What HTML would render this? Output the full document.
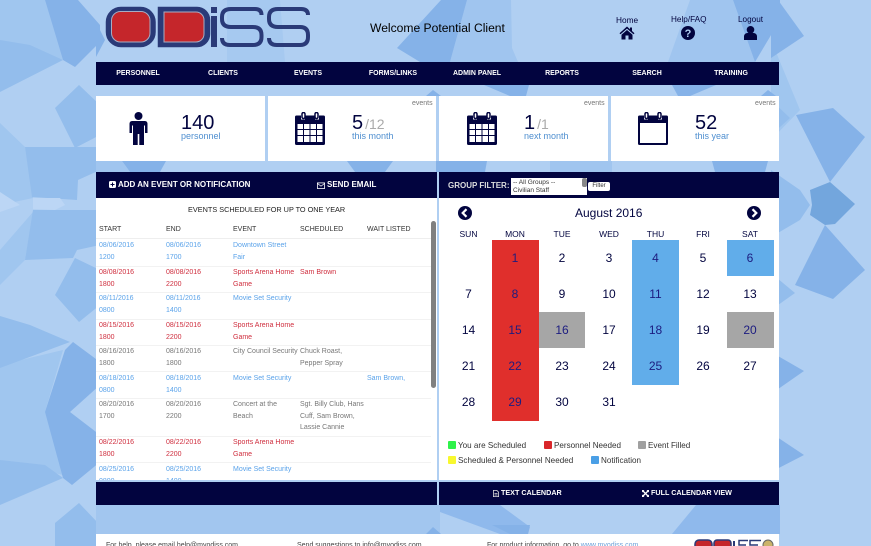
<!DOCTYPE html>
<html><head><meta charset="utf-8"><style>
html,body{margin:0;padding:0}
body{width:871px;height:546px;overflow:hidden;position:relative;background:#b0cff2;font-family:"Liberation Sans",sans-serif;color:#02043f}
#w{position:absolute;left:0;top:0;width:871px;height:546px;overflow:hidden;filter:blur(.3px)}
.a{position:absolute}
.t{position:absolute;white-space:nowrap}
.nav{position:absolute;top:62px;height:23px;line-height:23px;color:#fff;font-size:7px;font-weight:bold;white-space:nowrap;transform:translateX(-50%)}
.bar{position:absolute;background:#02043f}
.card{position:absolute;top:96px;height:65px;background:#fff}
.ev{position:absolute;top:100px;font-size:7px;color:#777;line-height:8px}
.num{position:absolute;top:112px;font-size:20px;line-height:22px;color:#02043f;white-space:nowrap}
.num span{color:#aaa;font-size:14px;margin-left:2px}
.lab{position:absolute;top:131px;font-size:9px;line-height:11px;color:#4f8fd0;white-space:nowrap}
.r{position:absolute;font-size:7px;line-height:11.6px;white-space:nowrap}
.b{color:#5ba3ea}.d{color:#cf2e3e}.g{color:#777}
.dow{position:absolute;top:229px;width:47px;text-align:center;font-size:8.5px;line-height:10px;color:#02043f}
.c{position:absolute;width:47px;height:36px;line-height:36px;text-align:center;font-size:12px;color:#02043f}
.k{color:#1c1c80}
.f{position:absolute;width:46.5px}
.lg{position:absolute;font-size:8.1px;line-height:10px;color:#333;white-space:nowrap}
.sw{position:absolute;width:8px;height:8px;border-radius:1px}
</style></head><body><div id="w">
<svg class="a" style="left:0;top:0" width="871" height="546" viewBox="0 0 871 546">
<g fill="#a0c6ef"><polygon points="0,0 45,0 63,60 0,40"/><polygon points="0,123 25,147 33,198 0,205"/><polygon points="0,250 33,212 25,260 0,285"/><polygon points="0,365 63,350 45,412 63,475 0,460"/><polygon points="771,40 800,110 771,140"/></g>
<g fill="#93bdec"><polygon points="0,40 30,45 63,60 0,92"/><polygon points="0,316 30,325 70,342 0,368"/><polygon points="0,460 45,465 63,478 0,505"/><polygon points="55,108 79,85 100,105 100,135 75,148"/><polygon points="55,295 79,322 100,305 100,270 75,258"/><polygon points="55,523 79,503 100,525 100,546 55,546"/><polygon points="25,147 100,147 100,170 78,180 77,200 32,197"/><polygon points="33,210 100,210 100,245 77,250 73,258 25,260"/><polygon points="771,170 800,190 810,205 800,220 771,237"/><polygon points="771,100 790,118 771,135"/><polygon points="771,273 795,293 771,310"/></g>
<g fill="#85b2e8"><polygon points="45,0 78,0 100,25 100,42 75,67 63,60"/><polygon points="73,342 100,362 100,385 70,412 100,435 100,462 72,485 63,478 45,412 65,350"/><polygon points="771,0 771,58 804,36 778,0"/><polygon points="796,115 833,108 865,137 830,182"/><polygon points="825,225 865,270 833,299 795,285"/><polygon points="771,352 804,371 771,394"/><polygon points="771,433 804,455 771,472"/></g>
<polygon fill="#73a6dd" points="810,190 830,182 855,204 835,224 825,225 810,215 812,205"/>
<g fill="#bcd6f5"><polygon points="0,192 20,205 0,212"/><polygon points="33,198 60,198 65,205 55,210 33,209"/></g>
<!-- header band -->
<g fill="#a6c9f0"><polygon points="227,0 280,0 285,62 227,62"/></g>
<g fill="#a0c5ef"><polygon points="467,0 511,0 512,48 518,62 450,62"/><polygon points="690,0 733,0 755,62 668,62"/></g>
<g fill="#85b2e8"><polygon points="96,22 105,40 96,57"/><polygon points="397,48 441,0 467,0 450,62 420,62"/><polygon points="733,0 780,0 780,20 755,62"/></g>
<!-- gap 85-96 -->
<g fill="#85b2e8"><polygon points="426,96 433,90 441,96"/><polygon points="484,85 529,85 526,96 510,96"/><polygon points="672,85 716,85 690,96 678,96"/><polygon points="761,96 768,90 776,96"/></g>
<!-- gap 161-172 -->
<g fill="#85b2e8"><polygon points="122,161 166,161 160,172 130,172"/><polygon points="347,161 393,161 385,172 355,172"/><polygon points="436,161 487,161 485,172 436,172"/><polygon points="712,161 768,161 765,172 715,172"/></g>
<g fill="#a0c5ef"><polygon points="96,161 122,161 130,172 96,172"/><polygon points="550,161 612,161 612,172 550,172"/></g>
<!-- bottom gap -->
<g fill="#a2c6ef"><polygon points="96,505 440,505 440,534 96,534"/></g>
<g fill="#8fb9ec"><polygon points="440,505 500,505 530,527 528,534 500,534 440,512"/><polygon points="672,534 696,505 780,505 780,534"/></g>
<g fill="#85b2e8"><polygon points="426,534 433,527 441,534"/><polygon points="492,525 530,525 528,534 510,534"/></g>
</svg>

<!-- logo -->
<svg class="a" style="left:0;top:0" width="320" height="52" viewBox="0 0 320 52">
<rect x="108" y="9" width="45.500" height="36" rx="13" fill="#2a3a78" stroke="#2a3a78" stroke-width="4.500"/>
<rect x="111.500" y="11.500" width="38.500" height="30.500" rx="9" fill="#c5262b" stroke="#a6adc4" stroke-width="1"/>
<path d="M160 9H197a11 11 0 0 1 11 11V34a11 11 0 0 1 -11 11H160Z" fill="#2a3a78" stroke="#2a3a78" stroke-width="4.500"/>
<path d="M164 12H196a8 8 0 0 1 8 8V34a8 8 0 0 1 -8 8H164Z" fill="#c5262b" stroke="#a6adc4" stroke-width="1"/>
<rect x="211" y="7" width="6" height="6" fill="#2a3a78"/>
<rect x="211" y="16" width="6" height="31" fill="#2a3a78"/>
<path d="M261.500 15Q261.500 9 255 9H231Q222 9 222 17V19Q222 27 231 27H253Q261.500 27 261.500 35V37Q261.500 45 253 45H230Q222 45 222 38" fill="none" stroke="#2a3a78" stroke-width="4"/>
<path d="M308 15Q308 9 301 9H278Q269 9 269 17V19Q269 27 278 27H300Q308 27 308 35V37Q308 45 300 45H277Q269 45 269 38" fill="none" stroke="#2a3a78" stroke-width="4"/>
</svg>

<div class="t" style="left:370px;top:20px;font-size:12.1px;line-height:16px;color:#000">Welcome Potential Client</div>

<div class="t" style="left:616px;top:15px;font-size:8.3px;line-height:10px;color:#02043f">Home</div>
<div class="t" style="left:671px;top:15px;font-size:8.2px;line-height:10px;color:#02043f">Help/FAQ</div>
<div class="t" style="left:738px;top:15px;font-size:8.2px;line-height:10px;color:#02043f">Logout</div>
<svg class="a" style="left:619px;top:26px" width="16" height="14" viewBox="0 0 16 14"><path d="M8 0.500 0.500 7.200 1.500 8.300 8 2.600 14.500 8.300 15.500 7.200 13 5V1.500H11V3.200Z" fill="#02043f"/><path d="M8 4 2.500 8.700V13.500H6.500V9.500H9.500V13.500H13.500V8.700Z" fill="#02043f"/></svg>
<svg class="a" style="left:681px;top:26px" width="14" height="14" viewBox="0 0 14 14"><circle cx="7" cy="7" r="7" fill="#02043f"/><text x="7" y="11" text-anchor="middle" font-family="Liberation Sans" font-weight="bold" font-size="11" fill="#afcdf1">?</text></svg>
<svg class="a" style="left:744px;top:26px" width="13" height="14" viewBox="0 0 13 14"><circle cx="6.500" cy="3.800" r="3.800" fill="#02043f"/><path d="M0 14V10.500C0 8.500 1.500 7 3.500 7H9.500C11.500 7 13 8.500 13 10.500V14Z" fill="#02043f"/></svg>

<!-- nav -->
<div class="bar" style="left:96px;top:62px;width:683px;height:23px"></div>
<div class="nav" style="left:138px">PERSONNEL</div>
<div class="nav" style="left:223px">CLIENTS</div>
<div class="nav" style="left:308px">EVENTS</div>
<div class="nav" style="left:393px">FORMS/LINKS</div>
<div class="nav" style="left:477px">ADMIN PANEL</div>
<div class="nav" style="left:562px">REPORTS</div>
<div class="nav" style="left:647px">SEARCH</div>
<div class="nav" style="left:731px">TRAINING</div>

<!-- cards -->
<div class="card" style="left:96px;width:169px"></div>
<div class="card" style="left:268px;width:168px"></div>
<div class="card" style="left:439px;width:169px"></div>
<div class="card" style="left:611px;width:168px"></div>
<svg class="a" style="left:129px;top:112px" width="19" height="33" viewBox="0 0 19 33"><circle cx="9.500" cy="4" r="4" fill="#02043f"/><path d="M3.500 9H15.500C17.500 9 18.500 10 18.500 12V21H16V13.500H15V33H10.300V22H8.700V33H4V13.500H3V21H.5V12C.5 10 1.500 9 3.500 9Z" fill="#02043f"/></svg>
<div class="num" style="left:181px">140</div><div class="lab" style="left:181px">personnel</div>

<svg class="a" style="left:295px;top:112px" width="30" height="33" viewBox="0 0 30 33"><path d="M1.500 3.500H6V7.500H10V3.500H20V7.500H24V3.500H28.500A1.500 1.500 0 0 1 30 5V31.500A1.500 1.500 0 0 1 28.500 33H1.500A1.500 1.500 0 0 1 0 31.500V5A1.500 1.500 0 0 1 1.500 3.500Z" fill="#02043f"/><rect x="7" y="0.500" width="3" height="6" rx="1.500" fill="#fff" stroke="#02043f" stroke-width="1.500"/><rect x="20" y="0.500" width="3" height="6" rx="1.500" fill="#fff" stroke="#02043f" stroke-width="1.500"/><g fill="#fff"><rect x="2.500" y="12" width="5.500" height="5"/><rect x="9" y="12" width="5.500" height="5"/><rect x="15.500" y="12" width="5.500" height="5"/><rect x="22" y="12" width="5.500" height="5"/><rect x="2.500" y="18" width="5.500" height="5"/><rect x="9" y="18" width="5.500" height="5"/><rect x="15.500" y="18" width="5.500" height="5"/><rect x="22" y="18" width="5.500" height="5"/><rect x="2.500" y="24" width="5.500" height="6"/><rect x="9" y="24" width="5.500" height="6"/><rect x="15.500" y="24" width="5.500" height="6"/><rect x="22" y="24" width="5.500" height="6"/></g></svg>
<div class="ev" style="left:412px">events</div>
<div class="num" style="left:352px">5<span>/12</span></div><div class="lab" style="left:352px">this month</div>

<svg class="a" style="left:467px;top:112px" width="30" height="33" viewBox="0 0 30 33"><path d="M1.500 3.500H6V7.500H10V3.500H20V7.500H24V3.500H28.500A1.500 1.500 0 0 1 30 5V31.500A1.500 1.500 0 0 1 28.500 33H1.500A1.500 1.500 0 0 1 0 31.500V5A1.500 1.500 0 0 1 1.500 3.500Z" fill="#02043f"/><rect x="7" y="0.500" width="3" height="6" rx="1.500" fill="#fff" stroke="#02043f" stroke-width="1.500"/><rect x="20" y="0.500" width="3" height="6" rx="1.500" fill="#fff" stroke="#02043f" stroke-width="1.500"/><g fill="#fff"><rect x="2.500" y="12" width="5.500" height="5"/><rect x="9" y="12" width="5.500" height="5"/><rect x="15.500" y="12" width="5.500" height="5"/><rect x="22" y="12" width="5.500" height="5"/><rect x="2.500" y="18" width="5.500" height="5"/><rect x="9" y="18" width="5.500" height="5"/><rect x="15.500" y="18" width="5.500" height="5"/><rect x="22" y="18" width="5.500" height="5"/><rect x="2.500" y="24" width="5.500" height="6"/><rect x="9" y="24" width="5.500" height="6"/><rect x="15.500" y="24" width="5.500" height="6"/><rect x="22" y="24" width="5.500" height="6"/></g></svg>
<div class="ev" style="left:584px">events</div>
<div class="num" style="left:524px">1<span>/1</span></div><div class="lab" style="left:524px">next month</div>

<svg class="a" style="left:638px;top:112px" width="30" height="33" viewBox="0 0 30 33"><path d="M1.500 3.500H6V7.500H10V3.500H20V7.500H24V3.500H28.500A1.500 1.500 0 0 1 30 5V31.500A1.500 1.500 0 0 1 28.500 33H1.500A1.500 1.500 0 0 1 0 31.500V5A1.500 1.500 0 0 1 1.500 3.500Z" fill="#02043f"/><rect x="7" y="0.500" width="3" height="6" rx="1.500" fill="#fff" stroke="#02043f" stroke-width="1.500"/><rect x="20" y="0.500" width="3" height="6" rx="1.500" fill="#fff" stroke="#02043f" stroke-width="1.500"/><rect x="2" y="11" width="26" height="20" fill="#fff"/></svg>
<div class="ev" style="left:755px">events</div>
<div class="num" style="left:695px">52</div><div class="lab" style="left:695px">this year</div>

<!-- left panel -->
<div class="bar" style="left:96px;top:172px;width:340.500px;height:26px"></div>
<div class="a" style="left:96px;top:198px;width:340.500px;height:282px;background:#fff"></div>
<svg class="a" style="left:109px;top:181px" width="7" height="7" viewBox="0 0 7 7"><rect width="7" height="7" rx="1.500" fill="#fff"/><path d="M3 1.500H4V3H5.500V4H4V5.500H3V4H1.500V3H3Z" fill="#02043f"/></svg>
<div class="t" style="left:118px;top:179px;font-size:8px;line-height:12px;font-weight:bold;color:#fff">ADD AN EVENT OR NOTIFICATION</div>
<svg class="a" style="left:317px;top:182px" width="8" height="7" viewBox="0 0 8 7"><rect x=".4" y=".9" width="7.200" height="5.600" fill="none" stroke="#fff" stroke-width=".8"/><path d="M.5 1.500 4 4.200 7.500 1.500" fill="none" stroke="#fff" stroke-width=".7"/></svg>
<div class="t" style="left:327px;top:179px;font-size:8px;line-height:12px;font-weight:bold;color:#fff">SEND EMAIL</div>
<div class="t" style="left:188px;top:205px;font-size:7.300px;line-height:10px;color:#222">EVENTS SCHEDULED FOR UP TO ONE YEAR</div>

<div class="t" style="left:99px;top:225px;font-size:7px;line-height:9px;color:#333">START</div>
<div class="t" style="left:166px;top:225px;font-size:7px;line-height:9px;color:#333">END</div>
<div class="t" style="left:233px;top:225px;font-size:7px;line-height:9px;color:#333">EVENT</div>
<div class="t" style="left:300px;top:225px;font-size:7px;line-height:9px;color:#333">SCHEDULED</div>
<div class="t" style="left:367px;top:225px;font-size:7px;line-height:9px;color:#333">WAIT LISTED</div>

<div class="a" style="left:96px;top:198px;width:335px;height:282px;overflow:hidden">
<div class="a" style="left:0;top:40px;width:335px;height:1px;background:#eee"></div>
<div class="a" style="left:0;top:68px;width:335px;height:1px;background:#f2f2f2"></div>
<div class="a" style="left:0;top:94px;width:335px;height:1px;background:#f2f2f2"></div>
<div class="a" style="left:0;top:121px;width:335px;height:1px;background:#f2f2f2"></div>
<div class="a" style="left:0;top:147px;width:335px;height:1px;background:#f2f2f2"></div>
<div class="a" style="left:0;top:173px;width:335px;height:1px;background:#f2f2f2"></div>
<div class="a" style="left:0;top:200px;width:335px;height:1px;background:#f2f2f2"></div>
<div class="a" style="left:0;top:238px;width:335px;height:1px;background:#f2f2f2"></div>
<div class="a" style="left:0;top:264px;width:335px;height:1px;background:#f2f2f2"></div>

<div class="r b" style="left:3px;top:42px">08/06/2016<br>1200</div><div class="r b" style="left:70px;top:42px">08/06/2016<br>1700</div><div class="r b" style="left:137px;top:42px">Downtown Street<br>Fair</div>
<div class="r d" style="left:3px;top:69px">08/08/2016<br>1800</div><div class="r d" style="left:70px;top:69px">08/08/2016<br>2200</div><div class="r d" style="left:137px;top:69px">Sports Arena Home<br>Game</div><div class="r d" style="left:204px;top:69px">Sam Brown</div>
<div class="r b" style="left:3px;top:95px">08/11/2016<br>0800</div><div class="r b" style="left:70px;top:95px">08/11/2016<br>1400</div><div class="r b" style="left:137px;top:95px">Movie Set Security</div>
<div class="r d" style="left:3px;top:122px">08/15/2016<br>1800</div><div class="r d" style="left:70px;top:122px">08/15/2016<br>2200</div><div class="r d" style="left:137px;top:122px">Sports Arena Home<br>Game</div>
<div class="r g" style="left:3px;top:148px">08/16/2016<br>1800</div><div class="r g" style="left:70px;top:148px">08/16/2016<br>1800</div><div class="r g" style="left:137px;top:148px">City Council Security</div><div class="r g" style="left:204px;top:148px">Chuck Roast,<br>Pepper Spray</div>
<div class="r b" style="left:3px;top:175px">08/18/2016<br>0800</div><div class="r b" style="left:70px;top:175px">08/18/2016<br>1400</div><div class="r b" style="left:137px;top:175px">Movie Set Security</div><div class="r b" style="left:271px;top:175px">Sam Brown,</div>
<div class="r g" style="left:3px;top:201px">08/20/2016<br>1700</div><div class="r g" style="left:70px;top:201px">08/20/2016<br>2200</div><div class="r g" style="left:137px;top:201px">Concert at the<br>Beach</div><div class="r g" style="left:204px;top:201px">Sgt. Billy Club, Hans<br>Cuff, Sam Brown,<br>Lassie Cannie</div>
<div class="r d" style="left:3px;top:239px">08/22/2016<br>1800</div><div class="r d" style="left:70px;top:239px">08/22/2016<br>2200</div><div class="r d" style="left:137px;top:239px">Sports Arena Home<br>Game</div>
<div class="r b" style="left:3px;top:266px">08/25/2016<br>0800</div><div class="r b" style="left:70px;top:266px">08/25/2016<br>1400</div><div class="r b" style="left:137px;top:266px">Movie Set Security</div>
</div>
<div class="a" style="left:431px;top:221px;width:5px;height:167px;background:#808080;border-radius:3px"></div>

<div class="bar" style="left:96px;top:482px;width:340.500px;height:23px"></div>

<!-- right panel -->
<div class="bar" style="left:439px;top:172px;width:340px;height:26px"></div>
<div class="a" style="left:439px;top:198px;width:340px;height:282px;background:#fff"></div>
<div class="t" style="left:448px;top:181px;font-size:8px;line-height:10px;font-weight:bold;color:#ddd">GROUP FILTER:</div>
<div class="a" style="left:511px;top:178px;width:76px;height:17px;background:#fff;font-size:6.500px;line-height:7.500px;color:#333;overflow:hidden"><div style="position:absolute;left:2px;top:1px;white-space:nowrap">-- All Groups --<br>Civilian Staff</div><div class="a" style="right:0;top:0;width:5px;height:9px;background:#888;border-radius:2px"></div></div>
<div class="a" style="left:588px;top:182px;width:22px;height:9px;background:#fff;border-radius:2px;font-size:6px;line-height:9px;text-align:center;color:#333">Filter</div>

<svg class="a" style="left:458px;top:206px" width="14" height="14" viewBox="0 0 14 14"><circle cx="7" cy="7" r="7" fill="#02043f"/><path d="M8.500 3.200 4.700 7 8.500 10.800" fill="none" stroke="#fff" stroke-width="2.200"/></svg>
<svg class="a" style="left:747px;top:206px" width="14" height="14" viewBox="0 0 14 14"><circle cx="7" cy="7" r="7" fill="#02043f"/><path d="M5.500 3.200 9.300 7 5.500 10.800" fill="none" stroke="#fff" stroke-width="2.200"/></svg>
<div class="t" style="left:575px;top:205px;font-size:12px;line-height:16px;color:#02043f">August 2016</div>

<div class="dow" style="left:445px">SUN</div><div class="dow" style="left:491.500px">MON</div><div class="dow" style="left:538.500px">TUE</div><div class="dow" style="left:585.500px">WED</div><div class="dow" style="left:632px">THU</div><div class="dow" style="left:679.500px">FRI</div><div class="dow" style="left:726.500px">SAT</div>

<div class="f" style="left:492px;top:240px;height:181px;background:#e02f2c"></div>
<div class="f" style="left:632px;top:240px;height:144.500px;background:#61adea"></div>
<div class="f" style="left:727px;top:240px;height:36px;background:#61adea"></div>
<div class="f" style="left:538.500px;top:312px;height:36px;background:#a6a6a6"></div>
<div class="f" style="left:727px;top:312px;height:36px;background:#a6a6a6"></div>

<div class="c k" style="left:491.500px;top:240px">1</div><div class="c" style="left:538.500px;top:240px">2</div><div class="c" style="left:585.500px;top:240px">3</div><div class="c k" style="left:632px;top:240px">4</div><div class="c" style="left:679.500px;top:240px">5</div><div class="c k" style="left:726.500px;top:240px">6</div>
<div class="c" style="left:445px;top:276px">7</div><div class="c k" style="left:491.500px;top:276px">8</div><div class="c" style="left:538.500px;top:276px">9</div><div class="c" style="left:585.500px;top:276px">10</div><div class="c k" style="left:632px;top:276px">11</div><div class="c" style="left:679.500px;top:276px">12</div><div class="c" style="left:726.500px;top:276px">13</div>
<div class="c" style="left:445px;top:312px">14</div><div class="c k" style="left:491.500px;top:312px">15</div><div class="c k" style="left:538.500px;top:312px">16</div><div class="c" style="left:585.500px;top:312px">17</div><div class="c k" style="left:632px;top:312px">18</div><div class="c" style="left:679.500px;top:312px">19</div><div class="c k" style="left:726.500px;top:312px">20</div>
<div class="c" style="left:445px;top:348px">21</div><div class="c k" style="left:491.500px;top:348px">22</div><div class="c" style="left:538.500px;top:348px">23</div><div class="c" style="left:585.500px;top:348px">24</div><div class="c k" style="left:632px;top:348px">25</div><div class="c" style="left:679.500px;top:348px">26</div><div class="c" style="left:726.500px;top:348px">27</div>
<div class="c" style="left:445px;top:384px">28</div><div class="c k" style="left:491.500px;top:384px">29</div><div class="c" style="left:538.500px;top:384px">30</div><div class="c" style="left:585.500px;top:384px">31</div>

<div class="sw" style="left:448px;top:441px;background:#2ef24a"></div><div class="lg" style="left:458px;top:441px">You are Scheduled</div>
<div class="sw" style="left:543.500px;top:441px;background:#d9262a"></div><div class="lg" style="left:554px;top:441px">Personnel Needed</div>
<div class="sw" style="left:638px;top:441px;background:#a0a0a0"></div><div class="lg" style="left:648px;top:441px">Event Filled</div>
<div class="sw" style="left:448px;top:456px;background:#f8f82e"></div><div class="lg" style="left:458px;top:456px">Scheduled &amp; Personnel Needed</div>
<div class="sw" style="left:590.500px;top:456px;background:#4a9fe6"></div><div class="lg" style="left:601px;top:456px">Notification</div>

<div class="bar" style="left:439px;top:482px;width:340px;height:23px"></div>
<svg class="a" style="left:493px;top:490px" width="6" height="7" viewBox="0 0 6 7"><path d="M.4.400H3.800L5.600 2.200V6.600H.4Z" fill="none" stroke="#ddd" stroke-width=".8"/><path d="M1.500 3.500H4.500M1.500 5H4.500" stroke="#ddd" stroke-width=".7"/></svg>
<div class="t" style="left:501px;top:488px;font-size:7.200px;line-height:10px;font-weight:bold;color:#fff">TEXT CALENDAR</div>
<svg class="a" style="left:642px;top:490px" width="7" height="7" viewBox="0 0 7 7"><path d="M.5.500 6.500 6.500M6.500.500 .5 6.500" stroke="#fff" stroke-width="1.300"/><path d="M0 0H2.500L0 2.500ZM7 0V2.500L4.500 0ZM0 7V4.500L2.500 7ZM7 7H4.500L7 4.500Z" fill="#fff"/></svg>
<div class="t" style="left:651px;top:488px;font-size:7.200px;line-height:10px;font-weight:bold;color:#fff">FULL CALENDAR VIEW</div>

<!-- footer -->
<div class="a" style="left:96px;top:534px;width:683px;height:12px;background:#fff;overflow:hidden">
<div class="t" style="left:10px;top:7px;font-size:7px;line-height:9px;color:#444">For help, please email help@myodiss.com</div>
<div class="t" style="left:201px;top:7px;font-size:7px;line-height:9px;color:#444">Send suggestions to info@myodiss.com</div>
<div class="t" style="left:391px;top:7px;font-size:7px;line-height:9px;color:#444">For product information, go to <span style="color:#6a9fd8">www.myodiss.com</span></div>
<svg class="a" style="left:598px;top:5px" width="82" height="10" viewBox="0 0 82 10"><rect x="1" y="1" width="17" height="12" rx="4" fill="#c5262b" stroke="#2a3a78" stroke-width="1.500"/><rect x="20" y="1" width="17" height="12" rx="3" fill="#c5262b" stroke="#2a3a78" stroke-width="1.500"/><rect x="39" y="2" width="2" height="10" fill="#2a3a78"/><path d="M54 1.500H45V6H52M67 1.500H56V6H64" fill="none" stroke="#2a3a78" stroke-width="1.500"/><circle cx="74" cy="6" r="5" fill="#cbb36a" stroke="#666" stroke-width="1"/></svg>
</div>
</div></body></html>
